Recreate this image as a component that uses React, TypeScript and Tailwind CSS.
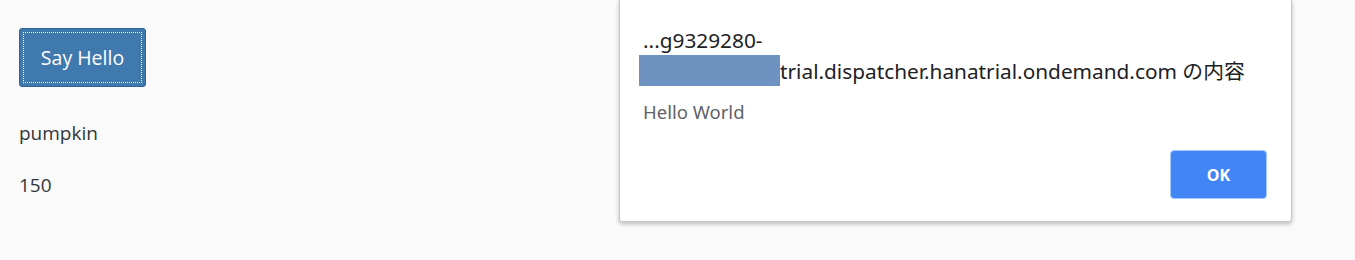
export default function App() {
  return (
    <div className="relative h-[260px] w-full overflow-hidden bg-[#fafafa] font-['Open_Sans','Noto_Sans',sans-serif]">
      {/* page content */}
      <div className="flex flex-col items-start px-[19px] pt-[28px]">
        <button
          type="button"
          className="flex h-[59px] w-[127px] items-center justify-center rounded-[3px] border border-[#2f6497] bg-[#3f79ae] p-[3px]"
        >
          <span className="flex h-full w-full items-center justify-center border border-dotted border-white text-[19.5px] font-medium text-white">
            Say Hello
          </span>
        </button>
        <p className="mt-[34px] text-[19px] leading-[24px] text-[#32363a]">pumpkin</p>
        <p className="mt-[28px] text-[19px] leading-[24px] text-[#32363a]">150</p>
      </div>

      {/* alert dialog */}
      <div className="absolute left-[619px] top-0 w-[673px] rounded-b-[3px] border border-t-0 border-[#c8c8c8] bg-white shadow-[0_2px_4px_rgba(0,0,0,0.25)]">
        <div className="pl-[23px] pr-[24px] pt-[25px] font-['Noto_Sans','Noto_Sans_CJK_JP',sans-serif]">
          <div className="text-[20.8px] leading-[30px] text-[#202124]">
            <div>...g9329280-</div>
            <div className="flex items-center">
              <span className="-ml-[4px] inline-block h-[31px] w-[141px] bg-[#6e93c0]" />
              <span>trial.dispatcher.hanatrial.ondemand.com の内容</span>
            </div>
          </div>
          <p className="mt-[14px] text-[18.5px] leading-[24px] text-[#5f6368]">Hello World</p>
          <div className="flex justify-end pb-[22px] pt-[26px]">
            <button
              type="button"
              className="flex h-[49px] w-[97px] items-center justify-center rounded-[4px] border border-[#a8c7fa] bg-[#4285f4] text-[16px] font-bold text-white"
            >
              OK
            </button>
          </div>
        </div>
      </div>
    </div>
  );
}
